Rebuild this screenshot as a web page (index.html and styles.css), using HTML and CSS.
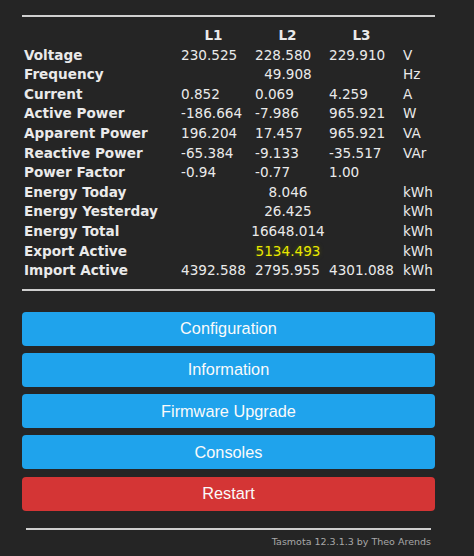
FILE: index.html
```html
<!DOCTYPE html>
<html>
<head>
<meta charset="utf-8">
<link rel="stylesheet" href="styles.css">
</head>
<body>
<div class="page">
  <div class="rule"></div>
  <table class="energy">
    <colgroup>
      <col class="c-label"><col class="c-val"><col class="c-val"><col class="c-val"><col class="c-unit">
    </colgroup>
    <tr><th></th><th class="ph">L1</th><th class="ph">L2</th><th class="ph">L3</th><th></th></tr>
    <tr><th>Voltage</th><td>230.525</td><td>228.580</td><td>229.910</td><td>V</td></tr>
    <tr><th>Frequency</th><td colspan="3" class="mid">49.908</td><td>Hz</td></tr>
    <tr><th>Current</th><td>0.852</td><td>0.069</td><td>4.259</td><td>A</td></tr>
    <tr><th>Active Power</th><td>-186.664</td><td>-7.986</td><td>965.921</td><td>W</td></tr>
    <tr><th>Apparent Power</th><td>196.204</td><td>17.457</td><td>965.921</td><td>VA</td></tr>
    <tr><th>Reactive Power</th><td>-65.384</td><td>-9.133</td><td>-35.517</td><td>VAr</td></tr>
    <tr><th>Power Factor</th><td>-0.94</td><td>-0.77</td><td>1.00</td><td></td></tr>
    <tr><th>Energy Today</th><td colspan="3" class="mid">8.046</td><td>kWh</td></tr>
    <tr><th>Energy Yesterday</th><td colspan="3" class="mid">26.425</td><td>kWh</td></tr>
    <tr><th>Energy Total</th><td colspan="3" class="mid">16648.014</td><td>kWh</td></tr>
    <tr><th>Export Active</th><td colspan="3" class="mid"><span class="hl">5134.493</span></td><td>kWh</td></tr>
    <tr><th>Import Active</th><td>4392.588</td><td>2795.955</td><td>4301.088</td><td>kWh</td></tr>
  </table>
  <div class="rule"></div>
  <div class="buttons">
    <button class="btn">Configuration</button>
    <button class="btn">Information</button>
    <button class="btn">Firmware Upgrade</button>
    <button class="btn">Consoles</button>
    <button class="btn danger">Restart</button>
  </div>
  <div class="footer">
    <div class="rule thin"></div>
    <div class="credit">Tasmota 12.3.1.3 by Theo Arends</div>
  </div>
</div>
</body>
</html>
```
FILE: styles.css
```css
html, body {
  margin: 0;
  padding: 0;
  background: #252525;
}
body {
  width: 474px;
  height: 556px;
  overflow: hidden;
  color: #eaeaea;
  font-family: "DejaVu Sans", Verdana, sans-serif;
}
.page {
  width: 413px;
  margin-left: 22px;
  padding-top: 15px;
}
.rule {
  height: 2px;
  background: #cfcfcf;
}
.energy {
  width: 100%;
  table-layout: fixed;
  border-collapse: collapse;
  margin: 9px 0 8px;
  font-size: 13.6px;
}
.c-label { width: 157px; }
.c-val { width: 74px; }
.c-unit { width: 34px; }
.energy th, .energy td {
  padding: 0 2px;
  height: 19.6px;
  line-height: 19.6px;
  white-space: nowrap;
  text-align: left;
}
.energy th { font-weight: bold; }
.energy th.ph { text-align: center; padding-right: 7px; }
.energy td.mid { text-align: center; padding-right: 6px; }
.hl {
  color: #e8e800;
  text-shadow: 0 0 4px rgba(90, 90, 0, 0.8);
}
.buttons {
  display: flex;
  flex-direction: column;
  gap: 7.25px;
  margin-top: 21px;
}
.btn {
  height: 34px;
  border: 0;
  border-radius: 4px;
  background: #1fa3ec;
  color: #fafafa;
  font-family: "Liberation Sans", Arial, sans-serif;
  font-size: 16.3px;
  padding: 0;
  width: 100%;
}
.btn.danger { background: #d43535; }
.footer {
  margin-top: 17px;
  padding: 0 4px;
}
.credit {
  text-align: right;
  font-size: 9.5px;
  color: #a8a8a8;
  margin-top: 6px;
}
```
